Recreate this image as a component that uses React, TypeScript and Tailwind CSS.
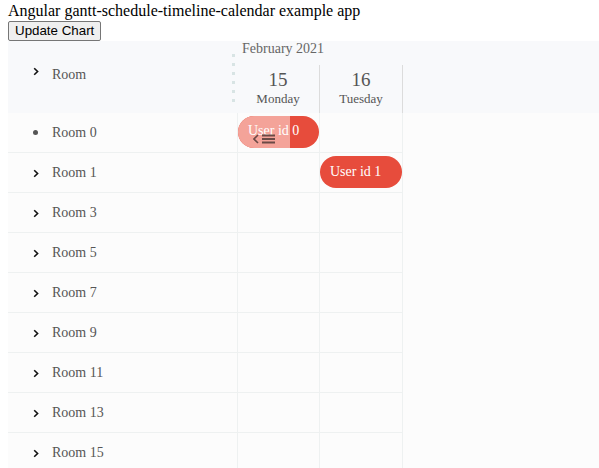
import React from "react";

const rooms = ["Room 0", "Room 1", "Room 3", "Room 5", "Room 7", "Room 9", "Room 11", "Room 13", "Room 15"];

function Chevron() {
  return (
    <svg width="6" height="9" viewBox="0 0 6 9" className="block">
      <path d="M1.2 1.2 L4.6 4.5 L1.2 7.8" stroke="#111" strokeWidth="1.6" fill="none" />
    </svg>
  );
}

function Bar({ label, split }: { label: string; split?: boolean }) {
  return (
    <div className="relative h-[32px] w-full overflow-hidden rounded-full bg-[#e74c3c]">
      {split && <div className="absolute left-0 top-0 h-full w-[52px] bg-[#f4a399]" />}
      <span
        className={`absolute left-[10px] text-[14px] leading-[17px] text-white whitespace-nowrap ${
          split ? "top-[6px]" : "top-[7px]"
        }`}
      >
        {label}
      </span>
      {split && (
        <svg width="24" height="10" viewBox="0 0 24 10" className="absolute left-[15px] top-[18px]">
          <path d="M5 1 L1 5 L5 9" stroke="#6b4a46" strokeWidth="1.6" fill="none" />
          <path d="M9 1.5 H22 M9 5 H22 M9 8.5 H22" stroke="#6b4a46" strokeWidth="1.8" />
        </svg>
      )}
    </div>
  );
}

export default function App() {
  return (
    <div className="min-h-screen bg-white font-['Liberation_Serif',serif] text-black">
      <div className="px-2 pt-[2px] text-[16px] leading-[18.5px]">
        Angular gantt-schedule-timeline-calendar example app
      </div>
      <div className="px-2">
        <button className="block h-[20px] rounded-[2px] border border-[#767676] bg-[#efefef] px-[6px] font-['Liberation_Sans',sans-serif] text-[13.33px] leading-[16px] text-black">
          Update Chart
        </button>
      </div>

      <div className="ml-2 bg-[#fcfcfc]">
        {/* header */}
        <div className="flex h-[72px] bg-[#f8f9fb]">
          <div className="relative flex w-[229px] items-center pl-[25px] pb-[4px]">
            <span className="mb-[6px]"><Chevron /></span>
            <span className="ml-[13px] text-[14px] text-[#555]">Room</span>
            <div className="absolute right-[2px] top-[13px] flex flex-col gap-[6px]">
              {[0, 1, 2, 3, 4, 5].map((i) => (
                <div key={i} className="h-[3px] w-[3px] bg-[#d8e4e4]" />
              ))}
            </div>
          </div>
          <div className="flex flex-col">
            <div className="h-[24px] pl-[5px] text-[14px] leading-[16px] text-[#666]">February 2021</div>
            <div className="flex h-[48px]">
              <div className="flex w-[82px] flex-col items-center pt-[4px] text-[#555]">
                <span className="text-[19px] leading-[22px]">15</span>
                <span className="text-[13px] leading-[15px]">Monday</span>
              </div>
              <div className="flex w-[83px] flex-col items-center border-l border-[#dcdcdc] pt-[4px] text-[#555]">
                <span className="text-[19px] leading-[22px]">16</span>
                <span className="text-[13px] leading-[15px]">Tuesday</span>
              </div>
              <div className="border-l border-[#dcdcdc]" />
            </div>
          </div>
        </div>

        {/* rows */}
        {rooms.map((room, i) => (
          <div key={room} className="flex h-[40px]">
            <div className="flex w-[229px] items-center border-b border-[#eef1f1] pl-[25px]">
              {i === 0 ? (
                <span className="mr-[14px] h-[5px] w-[5px] rounded-full bg-[#555]" />
              ) : (
                <span className="mr-[13px] mt-[2px]"><Chevron /></span>
              )}
              <span className="text-[14px] text-[#555]">{room}</span>
            </div>
            <div className="flex w-[82px] items-center border-b border-l border-[#eef1f1]">
              {i === 0 && <Bar label="User id 0" split />}
            </div>
            <div className="flex w-[83px] items-center border-b border-l border-[#eef1f1]">
              {i === 1 && <Bar label="User id 1" />}
            </div>
            <div className="border-l border-[#eef1f1]" />
          </div>
        ))}
      </div>
    </div>
  );
}
